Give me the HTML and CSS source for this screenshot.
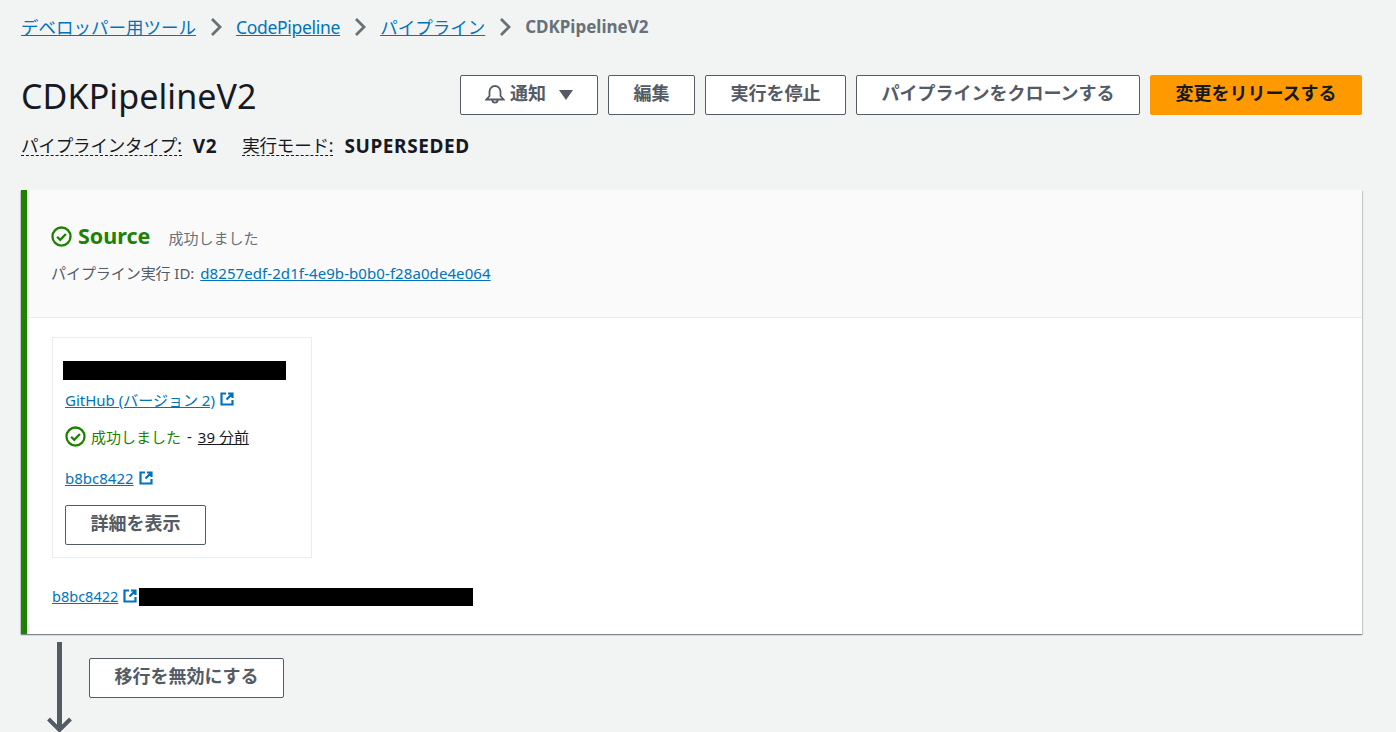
FILE: index.html
```html
<!DOCTYPE html>
<html lang="ja">
<head>
<meta charset="utf-8">
<title>CDKPipelineV2</title>
<link rel="stylesheet" href="styles.css">
</head>
<body>
<nav class="crumbs">
  <a href="#">デベロッパー用ツール</a>
  <svg class="chev" viewBox="0 0 12 20"><path d="M2 2l8 8-8 8"/></svg>
  <a class="latin" href="#">CodePipeline</a>
  <svg class="chev" viewBox="0 0 12 20"><path d="M2 2l8 8-8 8"/></svg>
  <a href="#">パイプライン</a>
  <svg class="chev" viewBox="0 0 12 20"><path d="M2 2l8 8-8 8"/></svg>
  <span class="current">CDKPipelineV2</span>
</nav>
<header class="head">
  <h1>CDKPipelineV2</h1>
  <div class="actions">
    <button class="btn btn-notify">
      <svg class="bell" viewBox="0 0 20 20"><path d="M1.500 15.500h17l-3-3.500V7.500a5.500 5.500 0 0 0-11 0V12zM7.300 16a2.700 2.700 0 0 0 5.400 0"/></svg>
      <span>通知</span>
      <svg class="caret" viewBox="0 0 14 10"><path d="M0 0h14L7 10z"/></svg>
    </button>
    <button class="btn btn-edit">編集</button>
    <button class="btn btn-stop">実行を停止</button>
    <button class="btn btn-clone">パイプラインをクローンする</button>
    <button class="btn btn-primary">変更をリリースする</button>
  </div>
</header>
<div class="meta">
  <span class="term">パイプラインタイプ:</span><strong class="val val-type">V2</strong>
  <span class="term">実行モード:</span><strong class="val">SUPERSEDED</strong>
</div>
<section class="stage">
  <div class="stage-head">
    <div class="stage-title">
      <svg class="ok ok-lg" viewBox="0 0 20 20"><circle cx="10" cy="10" r="8.600"/><path d="M5.800 10.200l3 3 5.400-5.600"/></svg>
      <h2>Source</h2>
      <span class="stage-status">成功しました</span>
    </div>
    <div class="exec">パイプライン実行 ID:<a href="#">d8257edf-2d1f-4e9b-b0b0-f28a0de4e064</a></div>
  </div>
  <div class="stage-body">
    <div class="action">
      <div class="redact redact-name"></div>
      <div class="row row-provider"><a href="#">GitHub (バージョン 2)</a><svg class="ext" viewBox="0 0 14 14"><path d="M6 1.500H1.500v11h11V8M8 1.500h4.500V6M12.500 1.500L6.500 7.500"/></svg></div>
      <div class="row row-state">
        <svg class="ok" viewBox="0 0 20 20"><circle cx="10" cy="10" r="8.600"/><path d="M5.800 10.200l3 3 5.400-5.600"/></svg>
        <span class="success">成功しました</span><span class="dash">-</span><span class="time">39 分前</span>
      </div>
      <div class="row row-commit"><a href="#">b8bc8422</a><svg class="ext" viewBox="0 0 14 14"><path d="M6 1.500H1.500v11h11V8M8 1.500h4.500V6M12.500 1.500L6.500 7.500"/></svg></div>
      <button class="btn btn-detail">詳細を表示</button>
    </div>
    <div class="commit-line">
      <a href="#">b8bc8422</a><svg class="ext" viewBox="0 0 14 14"><path d="M6 1.500H1.500v11h11V8M8 1.500h4.500V6M12.500 1.500L6.500 7.500"/></svg>
      <div class="redact redact-msg"></div>
    </div>
  </div>
</section>
<div class="transition">
  <svg class="arrow" viewBox="0 0 28 90"><path class="arrow-line" d="M13.500 0v88"/><path d="M2.500 77l11 11 11-11"/></svg>
  <button class="btn btn-disable">移行を無効にする</button>
</div>
</body>
</html>
```
FILE: styles.css
```css
* { box-sizing: border-box; }
html, body { height: 732px; overflow: hidden; }
body {
  margin: 0;
  padding: 0 34px 0 21px;
  background: #f2f3f3;
  color: #16191f;
  font-family: "Noto Sans", "Noto Sans CJK JP", sans-serif;
  font-size: 14px;
}
a { color: #0073bb; }
.crumbs {
  display: flex;
  align-items: center;
  height: 20px;
  margin-top: 17px;
  font-size: 17.5px;
  line-height: 20px;
  white-space: nowrap;
}
.crumbs .latin { letter-spacing: -0.3px; }
.crumbs .chev { width: 12px; height: 20px; margin: 0 14px; fill: none; stroke: #687078; stroke-width: 2.8; }
.current { color: #687078; font-weight: 700; font-size: 17px; }
.head { display: flex; justify-content: space-between; align-items: center; margin-top: 38px; height: 40px; }
h1 { margin: 0; padding-top: 2px; font-size: 34px; font-weight: 400; line-height: 44px; letter-spacing: 0.1px; }
.actions { display: flex; gap: 10px; }
.btn {
  display: inline-flex;
  align-items: center;
  justify-content: center;
  height: 40px;
  border: 1px solid #545b64;
  border-radius: 2px;
  background: #fff;
  color: #545b64;
  font-family: inherit;
  font-size: 18px;
  font-weight: 700;
  padding: 0 0 7px;
  white-space: nowrap;
}
.btn-notify { width: 138px; gap: 5px; }
.bell { width: 20px; height: 20px; fill: none; stroke: #545b64; stroke-width: 1.8; position: relative; top: 2px; }
.caret { width: 14px; height: 10px; fill: #545b64; margin-left: 8px; position: relative; top: 3px; }
.btn-edit { width: 87px; }
.btn-stop { width: 141px; }
.btn-clone { width: 284px; }
.btn-primary { width: 212px; background: #ff9900; border-color: #ff9900; color: #16191f; }
.meta { display: flex; align-items: center; margin-top: 19px; height: 24px; font-size: 17.5px; line-height: 22px; }
.term { border-bottom: 1px dashed #16191f; letter-spacing: -0.15px; line-height: 19px; }
.val { margin-left: 11px; font-size: 19px; font-weight: 700; letter-spacing: 0.6px; }
.val-type { margin-right: 25px; }
.stage {
  margin-top: 32px;
  height: 444px;
  background: #fff;
  border-left: 6px solid #1d8102;
  box-shadow: 0 1px 1px 0 rgba(0, 28, 36, .3), 1px 1px 1px 0 rgba(0, 28, 36, .15), -1px 1px 1px 0 rgba(0, 28, 36, .15);
}
.stage-head { height: 128px; padding: 31px 25px 0; background: #fafafa; border-bottom: 1px solid #eaeded; }
.stage-title { display: flex; align-items: center; height: 30px; }
.ok { width: 21px; height: 21px; flex: none; fill: none; stroke: #1d8102; stroke-width: 2.2; }
.ok-lg { margin-left: -1px; margin-right: 6px; }
h2 { margin: 0; color: #1d8102; font-size: 21.5px; font-weight: 700; line-height: 30px; }
.stage-status { margin-left: 18px; color: #687078; font-size: 15px; position: relative; top: 1px; }
.exec { margin-top: 12px; margin-left: -1px; color: #545b64; font-size: 15px; line-height: 20px; letter-spacing: -0.06px; }
.exec a { margin-left: 6px; letter-spacing: 0.08px; }
.stage-body { padding: 19px 25px 0; }
.action { width: 260px; height: 221px; padding: 23px 12px 0; background: #fff; border: 1px solid #eaeded; }
.redact { background: #000; }
.redact-name { width: 223px; height: 19px; margin-left: -2px; }
.row { display: flex; align-items: center; height: 20px; font-size: 15px; }
.row-provider { margin-top: 9px; }
.row-state { margin-top: 17px; }
.row-commit { margin-top: 22px; }
.ext { width: 14px; height: 14px; margin-left: 5px; flex: none; fill: none; stroke: #0073bb; stroke-width: 2.2; }
.success { color: #1d8102; margin-left: 5px; }
.dash { margin: 0 6px; }
.time { text-decoration: underline; }
.btn-detail { width: 141px; margin-top: 17px; }
.commit-line { display: flex; align-items: center; height: 19px; margin-top: 29px; font-size: 14.5px; }
.commit-line a { margin-bottom: 2px; }
.commit-line .ext { margin-left: 5px; margin-right: 2px; margin-bottom: 2px; }
.redact-msg { width: 334px; height: 18px; }
.transition { display: flex; align-items: flex-start; padding-left: 25px; margin-top: 8px; }
.arrow { width: 28px; height: 90px; flex: none; fill: none; stroke: #545b64; stroke-width: 4; }
.arrow-line { stroke-width: 5; }
.btn-disable { width: 195px; margin-left: 15px; margin-top: 16px; }
```
